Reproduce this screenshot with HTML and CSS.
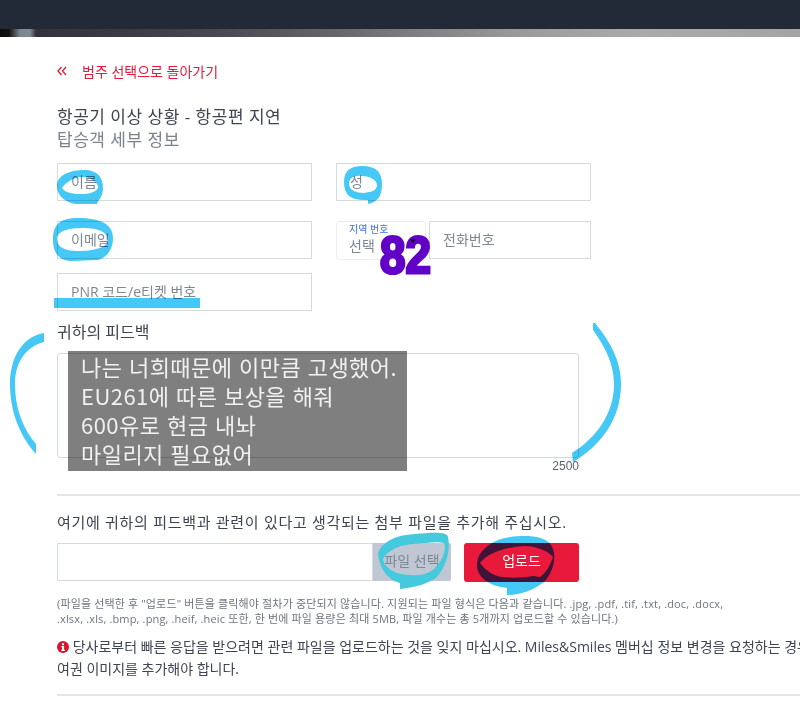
FILE: index.html
```html
<!DOCTYPE html>
<html lang="ko">
<head>
<meta charset="utf-8">
<title>피드백</title>
<link rel="stylesheet" href="styles.css">
</head>
<body>
<div class="page">
  <header class="hero"><div class="hero-bar"></div><div class="hero-strip"></div></header>
  <main class="content">
    <a class="back" href="#">
      <svg class="back-icon" viewBox="0 0 10 10" width="10" height="10"><path d="M4.500 1 1 5l3.500 4M9 1 5.500 5 9 9" fill="none" stroke="#e8193a" stroke-width="1.300"/></svg>
      <span>범주 선택으로 돌아가기</span>
    </a>
    <h1 class="title">항공기 이상 상황 - 항공편 지연</h1>
    <h2 class="subtitle">탑승객 세부 정보</h2>
    <div class="row row-first">
      <div class="field">이름</div>
      <div class="field">성</div>
    </div>
    <div class="row row-second">
      <div class="field">이메일</div>
      <div class="phone">
        <div class="code"><span class="code-label">지역 번호</span><span class="code-value">선택</span></div>
        <div class="field field-phone">전화번호</div>
      </div>
    </div>
    <div class="row row-third">
      <div class="field">PNR 코드/e티켓 번호</div>
    </div>
    <div class="label">귀하의 피드백</div>
    <div class="textarea"></div>
    <div class="counter">2500</div>
    <hr class="rule rule-top">
    <p class="attach">여기에 귀하의 피드백과 관련이 있다고 생각되는 첨부 파일을 추가해 주십시오.</p>
    <div class="upload-row">
      <div class="file-box"></div>
      <div class="file-btn">파일 선택</div>
      <div class="upload-btn">업로드</div>
    </div>
    <p class="hint">(파일을 선택한 후 "업로드" 버튼을 클릭해야 절차가 중단되지 않습니다. 지원되는 파일 형식은 다음과 같습니다. .jpg, .pdf, .tif, .txt, .doc, .docx,<br>.xlsx, .xls, .bmp, .png, .heif, .heic 또한, 한 번에 파일 용량은 최대 5MB, 파일 개수는 총 5개까지 업로드할 수 있습니다.)</p>
    <p class="notice">
      <svg class="notice-icon" viewBox="0 0 12 12" width="12" height="12"><circle cx="6" cy="6" r="6" fill="#e0102f"/><rect x="5" y="2.200" width="2" height="2" fill="#fff"/><path d="M4.400 5h2.700v3.800h.8V10H4.300V8.800h.8V6.200h-.7z" fill="#fff"/></svg>
      당사로부터 빠른 응답을 받으려면 관련 파일을 업로드하는 것을 잊지 마십시오. Miles&amp;Smiles 멤버십 정보 변경을 요청하는 경우<br>여권 이미지를 추가해야 합니다.
    </p>
    <hr class="rule rule-bottom">
  </main>

  <svg class="marks" viewBox="0 0 800 707" width="800" height="707">
    <g class="ink" fill-rule="evenodd">
      <path d="M57 186C57 174 72 170 84 170C98 170 103 178 103 188C103 197 98 200 97 204L80 204C70 205 57 198 57 186ZM62 188C66 194 76 194 84 194C90 194 98 191 98 187C98 182 90 177 82 177C74 177 66 182 62 188Z"/>
      <path d="M344 182C344 171 350 166 362 166C376 166 382 172 382 184C382 196 378 200 372 203L368 204L368 200C352 201 344 196 344 182ZM349 184C349 190 356 193 364 193L369 192C374 192 377 188 377 185C377 180 370 176 362 176C354 175 349 178 349 184Z"/>
      <path d="M53 240C53 224 60 218 78 218C100 218 113 224 113 238C113 250 106 258 98 260L72 261C60 261 53 254 53 240ZM57 239C57 247 64 251 78 251C92 251 108 248 108 240C108 232 98 228 84 228C68 228 57 231 57 239Z"/>
      <rect x="54" y="298" width="146" height="10"/>
      <path d="M44 333L44 342C28 346 15 360 15 384C15 410 24 430 36 444L36 454C20 436 10 412 10 384C10 356 24 336 44 333Z"/>
      <path d="M593 323L595 323C612 344 621 362 621 384C621 420 600 446 573 462L572 453C596 438 614 414 614 384C614 362 603 344 593 330Z"/>
      <path d="M477 565C477 552 490 540 510 537C525 535 545 535 551 545C558 555 553 572 545 581C535 590 520 595 507 595L507 588C490 586 477 578 477 565ZM480 563C488 553 505 547 525 546C535 546 547 550 553 557C550 565 547 572 540 577L533 576C520 578 510 578 503 577C495 577 485 570 480 563Z"/>
    </g>
    <path class="ink-soft" fill-rule="evenodd" d="M378 553C382 542 395 535 415 534C430 533 447 531 448 537C451 550 446 566 437 577C428 584 416 587 400 589L400 583C388 580 379 568 378 553ZM383 560C385 552 398 545 413 544C425 543 438 541 444 543C447 550 442 562 433 570C425 575 418 576 410 575C398 575 386 570 383 560Z"/>
  </svg>

  <div class="censor">
    <div>나는 너희때문에 이만큼 고생했어.</div>
    <div>EU261에 따른 보상을 해줘</div>
    <div>600유로 현금 내놔</div>
    <div>마일리지 필요없어</div>
  </div>
  <div class="scrawl">82</div>
  <div class="caret"></div>
</div>
</body>
</html>
```
FILE: styles.css
```css
html, body {
  margin: 0;
  padding: 0;
  background: #fff;
}
.page {
  position: relative;
  width: 800px;
  height: 707px;
  overflow: hidden;
  font-family: "Open Sans", "Noto Sans CJK KR", sans-serif;
  color: #4a5260;
}
.hero-bar {
  height: 29px;
  background: #222a38;
}
.hero-strip {
  height: 8px;
  background: linear-gradient(90deg, #0c0c0e 0, #111 9px, #7c868e 20px, #808a92 30px, #33323a 36px, #3a3a42 120px, #4a4850 220px, #66666c 340px, #808084 420px, #9a9a9c 520px, #aaaaac 640px, #a4a4a6 800px);
}
.content {
  width: 743px;
  padding-left: 57px;
}
.back {
  display: flex;
  align-items: center;
  height: 18px;
  margin-top: 25px;
  font-size: 14px;
  color: #e8193a;
  text-decoration: none;
}
.back-icon {
  margin-right: 15px;
}
.title, .subtitle {
  margin: 0;
  font-size: 17px;
  font-weight: 400;
  line-height: 23px;
  letter-spacing: 0.5px;
}
.title {
  margin-top: 25px;
  color: #3e4552;
}
.subtitle {
  color: #7a828e;
}
.row {
  display: flex;
  gap: 24px;
}
.row-first {
  margin-top: 12px;
}
.row-second {
  margin-top: 20px;
}
.row-third {
  margin-top: 13px;
}
.field {
  box-sizing: border-box;
  width: 255px;
  height: 38px;
  padding-left: 13px;
  border: 1px solid #d5d9e0;
  background: #fff;
  font-size: 14px;
  line-height: 35px;
  color: #7f8793;
}
.phone {
  display: flex;
  gap: 3px;
  width: 255px;
}
.code {
  box-sizing: border-box;
  display: flex;
  flex-direction: column;
  width: 90px;
  height: 39px;
  padding: 1px 0 0 12px;
  border: 1px solid #eceef3;
  border-radius: 3px;
  color: #7f8793;
}
.code-label {
  font-size: 10px;
  line-height: 13px;
  color: #3e74e6;
}
.code-value {
  font-size: 14px;
  line-height: 20px;
}
.field-phone {
  width: 162px;
}
.label {
  margin-top: 11px;
  font-size: 16px;
  line-height: 20px;
  color: #3e4552;
}
.textarea {
  box-sizing: border-box;
  width: 522px;
  height: 105px;
  margin-top: 11px;
  border: 1px solid #d5d9e0;
  border-radius: 3px;
}
.counter {
  width: 522px;
  height: 16px;
  font-family: "Liberation Sans", sans-serif;
  font-size: 12px;
  line-height: 16px;
  text-align: right;
  color: #5a6270;
}
.rule {
  width: 743px;
  height: 2px;
  margin: 0;
  border: 0;
  background: #e6e6e6;
}
.rule-top {
  margin-top: 20px;
}
.attach {
  margin: 15px 0 0;
  font-size: 15px;
  line-height: 22px;
  letter-spacing: 0.7px;
  color: #3e4552;
}
.upload-row {
  display: flex;
  margin-top: 10px;
  height: 39px;
}
.file-box {
  box-sizing: border-box;
  width: 316px;
  height: 38px;
  border: 1px solid #d5d9e0;
}
.file-btn {
  width: 78px;
  height: 38px;
  border-radius: 0 2px 2px 0;
  background: #c0c7d4;
  font-size: 14px;
  line-height: 36px;
  text-align: center;
  color: #7f8793;
}
.upload-btn {
  width: 115px;
  height: 39px;
  margin-left: 13px;
  border-radius: 3px;
  background: #e8193a;
  font-size: 14px;
  line-height: 36px;
  text-align: center;
  color: #fff;
}
.hint {
  margin: 14px 0 0;
  font-size: 11px;
  line-height: 15px;
  letter-spacing: 0.15px;
  white-space: nowrap;
  color: #6d7480;
}
.notice {
  margin: 10px 0 0;
  font-size: 14px;
  line-height: 22px;
  white-space: nowrap;
  color: #3e4552;
}
.notice-icon {
  vertical-align: -1px;
}
.rule-bottom {
  margin-top: 14px;
}
.marks {
  position: absolute;
  top: 0;
  left: 0;
  pointer-events: none;
}
.ink {
  fill: #45c8f5;
  mix-blend-mode: multiply;
}
.ink-soft {
  fill: #45c9dc;
}
.censor {
  position: absolute;
  top: 351px;
  left: 68px;
  box-sizing: border-box;
  width: 339px;
  height: 120px;
  padding: 1px 0 0 13px;
  background: rgba(0, 0, 0, 0.5);
  font-family: "Noto Sans CJK KR", sans-serif;
  font-size: 22px;
  line-height: 29px;
  letter-spacing: 0.45px;
  white-space: nowrap;
  color: #f0f0f0;
}
.scrawl {
  position: absolute;
  top: 227px;
  left: 380px;
  font-family: "Liberation Sans", sans-serif;
  font-size: 52px;
  font-weight: 700;
  line-height: 56px;
  color: #6200c8;
  -webkit-text-stroke: 3px #6200c8;
  transform: scaleX(0.88);
  transform-origin: left center;
}
.caret {
  position: absolute;
  top: 239px;
  left: 410px;
  width: 0;
  height: 0;
  border-left: 3px solid transparent;
  border-right: 3px solid transparent;
  border-top: 4px solid #111;
}
```
